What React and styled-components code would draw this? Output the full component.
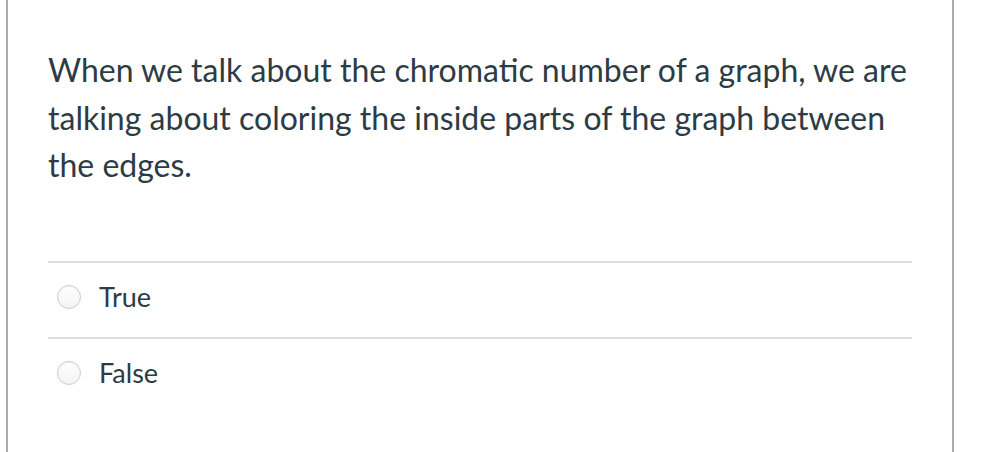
import React from 'react';
import styled, {createGlobalStyle} from 'styled-components';

const GlobalStyle = createGlobalStyle`
  html, body {
    margin: 0;
    padding: 0;
    background: #fff;
  }
  body {
    font-family: 'Lato', 'Helvetica Neue', Arial, sans-serif;
    color: #2d3b45;
  }
`;

const Page = styled.div`
  width: 1006px;
  height: 452px;
  overflow: hidden;
  background: #fff;
`;

const Card = styled.div`
  box-sizing: border-box;
  margin-left: 6px;
  width: 948px;
  height: 452px;
  border-left: 2px solid #aaaaaa;
  border-right: 2px solid #aaaaaa;
  padding: 46px 40px 0 40px;
`;

const QuestionText = styled.p`
  margin: 0;
  font-size: 32px;
  line-height: 47.5px;
  max-width: 864px;
`;

const Answers = styled.div`
  margin-top: 72px;
  width: 864px;
`;

const AnswerRow = styled.label`
  box-sizing: border-box;
  display: flex;
  align-items: center;
  height: 76px;
  border-top: 2px solid #dddddd;
  padding: 0 0 6px 9px;
  font-size: 27px;
`;

const Radio = styled.span`
  box-sizing: border-box;
  width: 24px;
  height: 24px;
  border-radius: 50%;
  border: 1px solid #c7cdd1;
  background: linear-gradient(#ffffff, #f3f3f3);
  box-shadow: inset 0 1px 1px rgba(0, 0, 0, 0.06);
  margin-right: 18px;
`;

const answers = ['True', 'False'];

const App = () => (
  <Page>
    <GlobalStyle />
    <Card>
      <QuestionText>
        When we talk about the chromatic number of a graph, we are talking about coloring the inside parts of the graph between the edges.
      </QuestionText>
      <Answers>
        {answers.map((a) => (
          <AnswerRow key={a}>
            <Radio />
            {a}
          </AnswerRow>
        ))}
      </Answers>
    </Card>
  </Page>
);

export default App;
